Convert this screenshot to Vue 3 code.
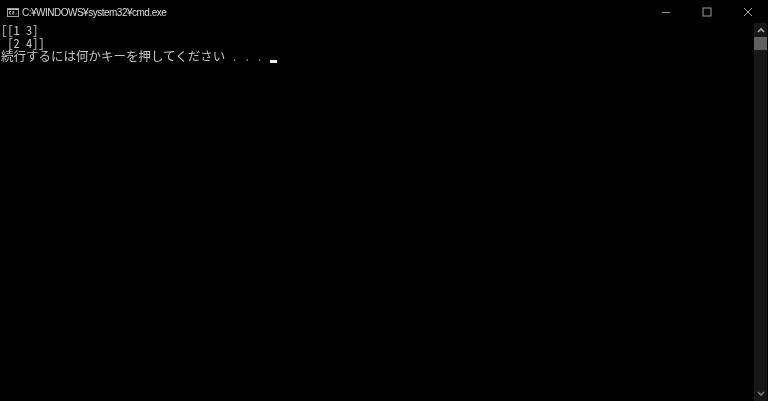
<script setup>
const lines = ['[[1 3]', ' [2 4]]']
const prompt = '続行するには何かキーを押してください'
</script>

<template>
  <div class="window">
    <header class="titlebar">
      <div class="title">
        <svg class="app-icon" width="12" height="9" viewBox="0 0 12 9">
          <rect x="0.5" y="0.5" width="11" height="8" fill="#000" stroke="#a0a0a0" />
          <rect x="1" y="1" width="10" height="1" fill="#b8b8b8" />
          <path d="M2.5 3.5h1.5M2.5 3.5v2.5h1.5M5.5 3.5h1.5v1.2H5.5V6H7" fill="none" stroke="#c8c8c8" stroke-width="0.8" />
          <path d="M8.5 6h1.2" stroke="#c8c8c8" stroke-width="0.8" />
        </svg>
        <span class="title-text">C:¥WINDOWS¥system32¥cmd.exe</span>
      </div>
      <div class="controls">
        <div class="control">
          <svg width="10" height="10" viewBox="0 0 10 10"><path d="M1 5.5h8" stroke="#8f8f8f" /></svg>
        </div>
        <div class="control">
          <svg width="10" height="10" viewBox="0 0 10 10"><rect x="1" y="1" width="8" height="8" fill="none" stroke="#a0a0a0" /></svg>
        </div>
        <div class="control">
          <svg width="10" height="10" viewBox="0 0 10 10"><path d="M1 1l8 8M9 1l-8 8" stroke="#a8a8a8" /></svg>
        </div>
      </div>
    </header>
    <div class="body">
      <main class="console">
        <div v-for="line in lines" :key="line" class="line">{{ line }}</div>
        <div class="line"><span>{{ prompt }}</span><span class="dots"> . . . </span><span class="cursor"></span></div>
      </main>
      <aside class="scrollbar">
        <div class="arrow">
          <svg width="8" height="6" viewBox="0 0 8 6"><path d="M1 5l3-3 3 3" fill="none" stroke="#a8a8a8" stroke-width="1.6" /></svg>
        </div>
        <div class="thumb"></div>
        <div class="track"></div>
        <div class="arrow">
          <svg width="8" height="6" viewBox="0 0 8 6"><path d="M1 1l3 3 3-3" fill="none" stroke="#7a7a7a" stroke-width="1.6" /></svg>
        </div>
      </aside>
    </div>
  </div>
</template>

<style scoped>
.window {
  width: 768px;
  height: 401px;
  display: flex;
  flex-direction: column;
  background: #000;
  overflow: hidden;
}
.titlebar {
  height: 23px;
  flex: none;
  display: flex;
  align-items: center;
  justify-content: space-between;
}
.title {
  display: flex;
  align-items: center;
  padding: 2px 0 0 7px;
  gap: 3px;
}
.title-text {
  font: 10px "Liberation Sans", sans-serif;
  letter-spacing: -0.5px;
  color: #dcdcdc;
  will-change: opacity;
}
.controls {
  display: flex;
}
.control {
  width: 41px;
  height: 23px;
  display: flex;
  align-items: center;
  justify-content: center;
}
.body {
  flex: 1;
  display: flex;
  min-height: 0;
}
.console {
  flex: 1;
  color: #c4c4c4;
  font: 12.5px/13px "Noto Sans CJK JP", sans-serif;
  font-feature-settings: "hwid";
  will-change: opacity;
}
.line {
  height: 13px;
  white-space: pre;
  display: flex;
  align-items: center;
  padding-left: 1px;
}
.dots {
  color: #8a8a8a;
}
.cursor {
  width: 7px;
  height: 3px;
  background: #f0f0f0;
  align-self: flex-end;
  margin: 0 0 -1px 1px;
}
.scrollbar {
  width: 13px;
  flex: none;
  margin-right: 1px;
  display: flex;
  flex-direction: column;
  background: #171717;
}
.arrow {
  height: 14px;
  flex: none;
  display: flex;
  align-items: center;
  justify-content: center;
}
.thumb {
  height: 13px;
  flex: none;
  background: #606060;
}
.track {
  flex: 1;
}
</style>
